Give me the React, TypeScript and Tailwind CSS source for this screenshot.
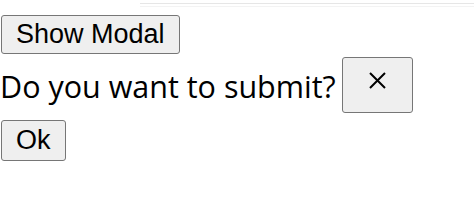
import React from 'react';

const btn =
  "border border-[#767676] rounded-[3px] bg-[#efefef] text-black font-['Liberation_Sans',Arial,sans-serif] text-[27px] leading-none";

export default function App() {
  return (
    <div className="w-[474px] h-[214px] bg-white overflow-hidden">
      {/* faint top rule */}
      <div className="pt-[3px] pl-[140px]">
        <div className="h-px bg-[#e6e6e6]" />
        <div className="h-px mt-[2px] bg-[#f3f3f3]" />
      </div>

      <div className="pl-px pt-[8px] flex flex-col items-start">
        <button className={`${btn} h-[39px] px-[14px]`}>Show Modal</button>

        {/* modal body */}
        <div className="flex items-start mt-[3px] -ml-px">
          <span className="pt-[14px] text-[30.5px] leading-none text-black font-['Open_Sans',sans-serif]">
            Do you want to submit?
          </span>
          <button className="w-[71px] h-[56px] border border-[#767676] rounded-[3px] bg-[#efefef] flex justify-center items-start pt-[14px] ml-[6px]">
            <svg width="17" height="17" viewBox="0 0 17 17" className="text-black">
              <path d="M1 1L16 16M16 1L1 16" stroke="currentColor" strokeWidth="2" />
            </svg>
          </button>
        </div>

        <button className={`${btn} h-[41px] px-[14px] mt-[7px]`}>Ok</button>
      </div>
    </div>
  );
}
